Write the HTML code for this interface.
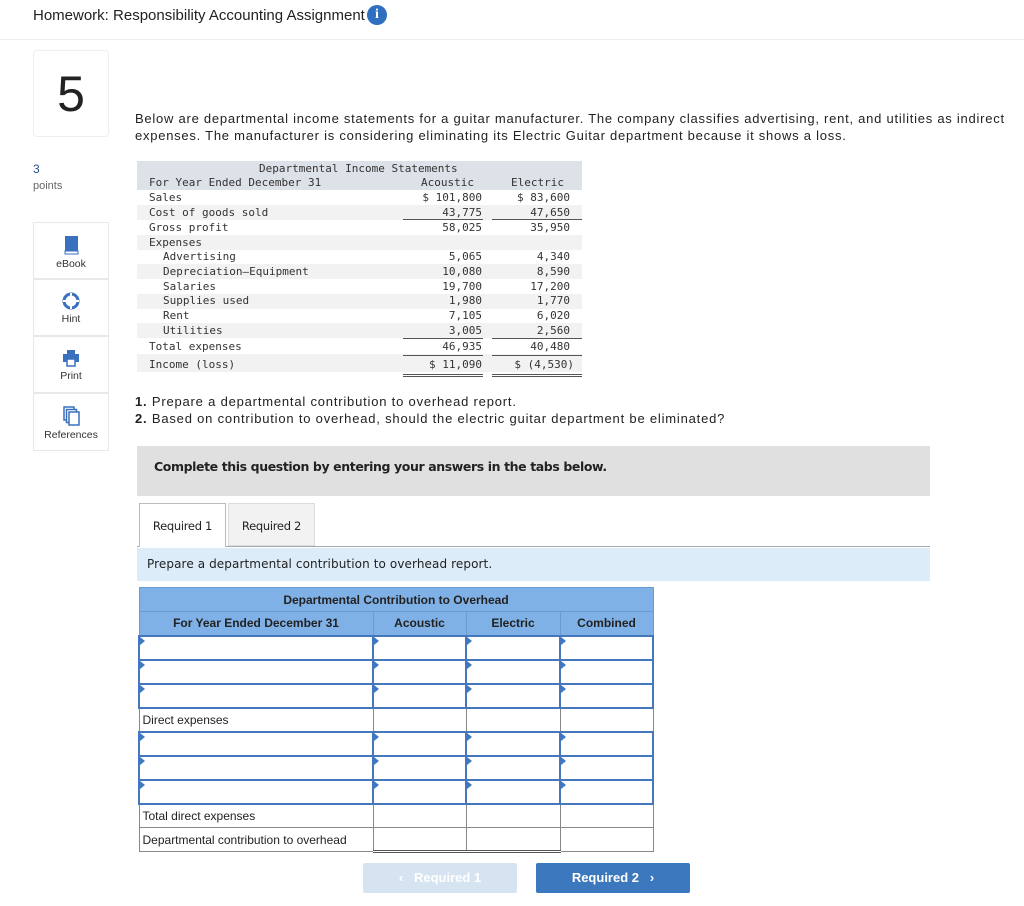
<!DOCTYPE html>
<html><head><meta charset="utf-8"><style>
*{box-sizing:border-box;margin:0;padding:0}
body{width:1024px;height:906px;background:#fff;font-family:"Liberation Sans",sans-serif;color:#222;position:relative;overflow:hidden}
.a{position:absolute}
.mono{font-family:"DejaVu Sans Mono","Liberation Mono",monospace;font-size:11px;color:#333}
.side{left:33px;width:76px;height:57px;border:1px solid #e8e8e8;text-align:center;font-size:10.5px;color:#333}
.side svg{display:block;margin:12px auto 3px}
.r{position:absolute;left:0;width:445px;height:15px}
.c{position:absolute;white-space:pre}
table.t{position:absolute;left:138px;top:587px;border-collapse:collapse;table-layout:fixed;font-size:12px}
table.t td{height:24px;padding:0 3px;border:1px solid #888}
.h td{background:#7fb0e6;font-weight:bold;text-align:center;color:#222;border:1px solid #6a9bd0 !important}
.in td{border:2px solid #4477bb !important;position:relative}
.in td:before{content:"";position:absolute;left:0;top:0;border-left:5px solid #3d78c4;border-top:4px solid transparent;border-bottom:4px solid transparent}
</style></head><body>
<div class="a" style="left:33px;top:7px;font-size:15px;color:#222">Homework: Responsibility Accounting Assignment</div>
<div class="a" style="left:367px;top:5px;width:20px;height:20px;border-radius:50%;background:#2f6fc0;color:#fff;font:bold 14px 'Liberation Serif',serif;text-align:center;line-height:20px">i</div>
<div class="a" style="left:0;top:39px;width:1024px;height:1px;background:#eee"></div>
<div class="a" style="left:33px;top:50px;width:76px;height:87px;border:1px solid #eee;border-radius:4px;text-align:center;font-size:50px;line-height:87px;color:#222">5</div>
<div class="a" style="left:135px;top:110px;font-size:13px;line-height:17px;color:#222;width:880px;letter-spacing:0.75px">Below are departmental income statements for a guitar manufacturer. The company classifies advertising, rent, and utilities as indirect expenses. The manufacturer is considering eliminating its Electric Guitar department because it shows a loss.</div>
<div class="a" style="left:33px;top:162px;font-size:12px;color:#2a4f8a">3</div>
<div class="a" style="left:33px;top:180px;font-size:11px;color:#666">points</div>
<div class="a side" style="top:222px"><svg width="16" height="20"><rect x="2" y="1" width="13" height="16" fill="#3a70bd"/><rect x="2" y="16" width="13" height="3" fill="#fff" stroke="#3a70bd"/></svg>eBook</div>
<div class="a side" style="top:279px"><svg width="18" height="18"><circle cx="9" cy="9" r="7" fill="none" stroke="#3a70bd" stroke-width="3"/><circle cx="9" cy="9" r="3" fill="#fff"/><path d="M9 1v4M9 13v4M1 9h4M13 9h4" stroke="#fff" stroke-width="2"/></svg>Hint</div>
<div class="a side" style="top:336px"><svg width="18" height="18"><rect x="5" y="1" width="8" height="4" fill="#3a70bd"/><rect x="1" y="5" width="16" height="8" fill="#3a70bd"/><rect x="5" y="10" width="8" height="7" fill="#fff" stroke="#3a70bd" stroke-width="1.5"/></svg>Print</div>
<div class="a side" style="top:393px;height:58px"><svg width="18" height="20"><rect x="2" y="1" width="10" height="13" fill="#fff" stroke="#3a70bd" stroke-width="1.5"/><rect x="4.5" y="3.5" width="10" height="13" fill="#fff" stroke="#3a70bd" stroke-width="1.5"/><rect x="7" y="6" width="10" height="13" fill="#fff" stroke="#3a70bd" stroke-width="1.5"/></svg>References</div>

<div class="a mono" style="left:137px;top:161px;width:445px;height:217px">
<div class="r" style="top:0;height:29px;background:#dde1e8"></div>
<div class="c" style="left:122px;top:1px">Departmental Income Statements</div>
<div class="c" style="left:12px;top:15px">For Year Ended December 31</div>
<div class="c" style="left:284px;top:15px">Acoustic</div><div class="c" style="left:374px;top:15px">Electric</div>
<div class="r" style="top:44px;background:#f2f2f2"></div>
<div class="r" style="top:74px;background:#f2f2f2"></div>
<div class="r" style="top:103px;background:#f2f2f2"></div>
<div class="r" style="top:133px;background:#f2f2f2"></div>
<div class="r" style="top:162px;background:#f2f2f2"></div>
<div class="r" style="top:193px;background:#f2f2f2;height:18px"></div>
<div class="c" style="left:12px;top:30px">Sales</div>
<div class="c" style="left:12px;top:45px">Cost of goods sold</div>
<div class="c" style="left:12px;top:60px">Gross profit</div>
<div class="c" style="left:12px;top:75px">Expenses</div>
<div class="c" style="left:26px;top:89px">Advertising</div>
<div class="c" style="left:26px;top:104px">Depreciation—Equipment</div>
<div class="c" style="left:26px;top:119px">Salaries</div>
<div class="c" style="left:26px;top:133px">Supplies used</div>
<div class="c" style="left:26px;top:148px">Rent</div>
<div class="c" style="left:26px;top:163px">Utilities</div>
<div class="c" style="left:12px;top:179px">Total expenses</div>
<div class="c" style="left:12px;top:197px">Income (loss)</div>
<div class="c" style="right:100px;top:30px;text-align:right;line-height:14.75px">$ 101,800
43,775
58,025

5,065
10,080
19,700
1,980
7,105
3,005
</div>
<div class="c" style="right:12px;top:30px;text-align:right;line-height:14.75px">$ 83,600
47,650
35,950

4,340
8,590
17,200
1,770
6,020
2,560
</div>
<div class="c" style="right:100px;top:179px">46,935</div><div class="c" style="right:12px;top:179px">40,480</div>
<div class="c" style="right:100px;top:197px">$ 11,090</div><div class="c" style="right:8px;top:197px">$ (4,530)</div>
<div class="a" style="left:266px;top:58px;width:80px;height:1px;background:#555"></div>
<div class="a" style="left:355px;top:58px;width:90px;height:1px;background:#555"></div>
<div class="a" style="left:266px;top:177px;width:80px;height:1px;background:#555"></div>
<div class="a" style="left:355px;top:177px;width:90px;height:1px;background:#555"></div>
<div class="a" style="left:266px;top:194px;width:80px;height:1px;background:#555"></div>
<div class="a" style="left:355px;top:194px;width:90px;height:1px;background:#555"></div>
<div class="a" style="left:266px;top:213px;width:80px;height:3px;border-top:1px solid #555;border-bottom:1px solid #555"></div>
<div class="a" style="left:355px;top:213px;width:90px;height:3px;border-top:1px solid #555;border-bottom:1px solid #555"></div>
</div>

<div class="a" style="left:135px;top:393px;font-size:13px;line-height:17px;letter-spacing:0.8px"><b>1.</b> Prepare a departmental contribution to overhead report.<br><b>2.</b> Based on contribution to overhead, should the electric guitar department be eliminated?</div>
<div class="a" style="left:137px;top:446px;width:793px;height:50px;background:#e0e0e0"></div>
<div class="a" style="left:154px;top:459px;font:bold 12.5px 'DejaVu Sans',sans-serif;color:#222;letter-spacing:-0.4px">Complete this question by entering your answers in the tabs below.</div>
<div class="a" style="left:137px;top:546px;width:793px;height:1px;background:#aaa"></div>
<div class="a" style="left:139px;top:503px;width:87px;height:44px;background:#fff;border:1px solid #bbb;border-bottom:none;font:11.5px 'DejaVu Sans',sans-serif;text-align:center;line-height:44px;letter-spacing:-0.3px">Required 1</div>
<div class="a" style="left:228px;top:503px;width:87px;height:43px;background:#f2f2f2;border:1px solid #ddd;font:11.5px 'DejaVu Sans',sans-serif;text-align:center;line-height:44px;letter-spacing:-0.3px">Required 2</div>
<div class="a" style="left:137px;top:548px;width:793px;height:33px;background:#dcecf8;font:12px 'DejaVu Sans',sans-serif;padding:9px 10px;letter-spacing:0.1px">Prepare a departmental contribution to overhead report.</div>

<table class="t">
<colgroup><col style="width:234px"><col style="width:93px"><col style="width:94px"><col style="width:93px"></colgroup>
<tr class="h"><td colspan="4">Departmental Contribution to Overhead</td></tr>
<tr class="h"><td>For Year Ended December 31</td><td>Acoustic</td><td>Electric</td><td>Combined</td></tr>
<tr class="in"><td></td><td></td><td></td><td></td></tr>
<tr class="in"><td></td><td></td><td></td><td></td></tr>
<tr class="in"><td></td><td></td><td></td><td></td></tr>
<tr><td>Direct expenses</td><td></td><td></td><td></td></tr>
<tr class="in"><td></td><td></td><td></td><td></td></tr>
<tr class="in"><td></td><td></td><td></td><td></td></tr>
<tr class="in"><td></td><td></td><td></td><td></td></tr>
<tr><td>Total direct expenses</td><td></td><td></td><td></td></tr>
<tr><td>Departmental contribution to overhead</td><td style="border-bottom:3px double #555"></td><td style="border-bottom:3px double #555"></td><td></td></tr>
</table>

<div class="a" style="left:363px;top:863px;width:154px;height:30px;background:#d6e3f1;border-radius:2px;color:#fff;font:bold 13px 'Liberation Sans',sans-serif;text-align:center;line-height:30px">‹&nbsp;&nbsp;&nbsp;Required 1</div>
<div class="a" style="left:536px;top:863px;width:154px;height:30px;background:#3b78bd;border-radius:2px;color:#fff;font:bold 13px 'Liberation Sans',sans-serif;text-align:center;line-height:30px">Required 2&nbsp;&nbsp;&nbsp;›</div>
</body></html>
